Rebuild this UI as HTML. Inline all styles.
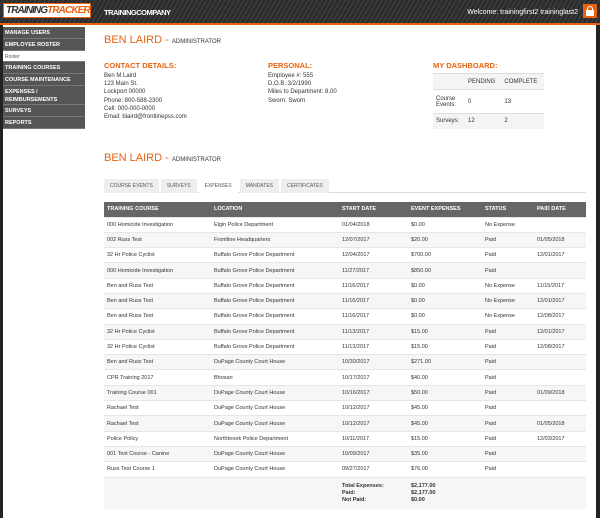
<!DOCTYPE html>
<html><head><style>
*{margin:0;padding:0;box-sizing:border-box}
body{width:600px;height:518px;overflow:hidden;font-family:"Liberation Sans",sans-serif;background:#fff;position:relative;font-size:6px;color:#333}
.hdr{position:absolute;left:0;top:0;width:600px;height:25px;background:repeating-linear-gradient(120deg,#2a2a2a 0 2px,#3a3a3a 2px 4px);border-bottom:2px solid #e8620f}
.logo{position:absolute;left:3px;top:3px;width:88px;height:15px;background:#fff;border:1px solid #e8620f;font:italic bold 10px/13px "Liberation Sans",sans-serif;letter-spacing:-0.9px;padding-left:2px;overflow:hidden;white-space:nowrap}
.logo b{color:#e8620f}
.co{position:absolute;left:104px;top:8px;color:#fff;font-weight:bold;font-size:7.5px;letter-spacing:-0.5px}
.wel{position:absolute;right:22px;top:9px;color:#fff;font-size:7px}
.lock{position:absolute;right:3px;top:4px;width:14px;height:14px;background:#e8620f}
.lock:before{content:"";position:absolute;left:4px;top:2px;width:4px;height:4px;border:1px solid #fff;border-bottom:none;border-radius:3px 3px 0 0}
.lock:after{content:"";position:absolute;left:3px;top:6px;width:8px;height:6px;background:#fff}
.lb{position:absolute;left:0;top:25px;width:3px;height:493px;background:#222}
.rb{position:absolute;right:0;top:25px;width:4px;height:493px;background:#222}
.sb{position:absolute;left:3px;top:27px;width:82px}
.sb div{background:#555;color:#fff;font-weight:bold;font-size:5.5px;padding:0 2px;border-bottom:1px solid #777;height:12px;line-height:12px}
.sb div.w{background:#fff;color:#555;font-weight:normal;font-size:5px;height:11px}
.sb div.t{height:19px;line-height:8px;padding-top:2px}
h1{position:absolute;font-weight:normal;font-size:11px;color:#e8620f}
h1 span{font-size:6px;color:#333}
h2{position:absolute;font-size:7.5px;color:#e8620f;top:61px}
.tx{position:absolute;top:72px;line-height:8.2px;font-size:6px}
.dash{position:absolute;left:433px;top:73px;width:111px;border-collapse:collapse;font-size:6px}
.dash td{padding:2px 3px;border-top:1px solid #ddd}
.tabs{position:absolute;left:104px;top:179px;height:14px;width:482px;border-bottom:1px solid #ddd}
.tabs span{float:left;height:14px;line-height:14px;background:#eee;margin-right:2px;padding:0 6px;font-size:5px;color:#555}
.tabs span.a{background:#fff}
table.m{position:absolute;left:104px;top:202px;width:482px;border-collapse:collapse;font-size:5.5px}
table.m th{background:#666;color:#fff;text-align:left;height:15px;padding-left:3px;font-size:5.5px}
table.m td{height:15.3px;padding-left:3px;border-top:1px solid #e6e6e6}
table.m tr:nth-child(odd) td{background:#f6f6f6}
</style></head><body>
<div class="hdr"><div class="logo">TRAINING<b>TRACKER</b></div><div class="co">TRAININGCOMPANY</div><div class="wel">Welcome: trainingfirst2 traininglast2</div><div class="lock"></div></div>
<div class="lb"></div><div class="rb"></div>
<div class="sb"><div>MANAGE USERS</div><div>EMPLOYEE ROSTER</div><div class="w">Roster</div><div>TRAINING COURSES</div><div>COURSE MAINTENANCE</div><div class="t">EXPENSES /<br>REIMBURSEMENTS</div><div>SURVEYS</div><div>REPORTS</div></div>
<h1 style="left:104px;top:34px">BEN LAIRD - <span>ADMINISTRATOR</span></h1>
<h2 style="left:104px">CONTACT DETAILS:</h2>
<h2 style="left:268px">PERSONAL:</h2>
<h2 style="left:433px">MY DASHBOARD:</h2>
<div class="tx" style="left:104px">Ben M Laird<br>123 Main St.<br>Lockport 00000<br>Phone: 800-588-2300<br>Cell: 000-000-0000<br>Email: blaird@frontlinepss.com</div>
<div class="tx" style="left:268px">Employee #: 555<br>D.O.B.:3/2/1990<br>Miles to Department: 8.00<br>Sworn: Sworn</div>
<table class="dash"><tr style="background:#f4f4f4"><td style="height:16px"></td><td>PENDING</td><td>COMPLETE</td></tr><tr><td style="height:24px">Course<br>Events:</td><td>0</td><td>13</td></tr><tr style="background:#f4f4f4"><td style="height:15px">Surveys:</td><td>12</td><td>2</td></tr></table>
<h1 style="left:104px;top:152px">BEN LAIRD - <span>ADMINISTRATOR</span></h1>
<div class="tabs"><span>COURSE EVENTS</span><span>SURVEYS</span><span class="a">EXPENSES</span><span>MANDATES</span><span>CERTIFICATES</span></div>
<table class="m">
<tr><th style="width:107px">TRAINING COURSE</th><th style="width:128px">LOCATION</th><th style="width:69px">START DATE</th><th style="width:74px">EVENT EXPENSES</th><th style="width:52px">STATUS</th><th>PAID DATE</th></tr>
<tr><td>000 Homicide Investigation</td><td>Elgin Police Department</td><td>01/04/2018</td><td>$0.00</td><td>No Expense</td><td></td></tr>
<tr><td>002 Russ Test</td><td>Frontline Headquarters</td><td>12/07/2017</td><td>$20.00</td><td>Paid</td><td>01/05/2018</td></tr>
<tr><td>32 Hr Police Cyclist</td><td>Buffalo Grove Police Department</td><td>12/04/2017</td><td>$700.00</td><td>Paid</td><td>12/01/2017</td></tr>
<tr><td>000 Homicide Investigation</td><td>Buffalo Grove Police Department</td><td>11/27/2017</td><td>$850.00</td><td>Paid</td><td></td></tr>
<tr><td>Ben and Russ Test</td><td>Buffalo Grove Police Department</td><td>11/16/2017</td><td>$0.00</td><td>No Expense</td><td>11/15/2017</td></tr>
<tr><td>Ben and Russ Test</td><td>Buffalo Grove Police Department</td><td>11/16/2017</td><td>$0.00</td><td>No Expense</td><td>12/01/2017</td></tr>
<tr><td>Ben and Russ Test</td><td>Buffalo Grove Police Department</td><td>11/16/2017</td><td>$0.00</td><td>No Expense</td><td>12/08/2017</td></tr>
<tr><td>32 Hr Police Cyclist</td><td>Buffalo Grove Police Department</td><td>11/13/2017</td><td>$15.00</td><td>Paid</td><td>12/01/2017</td></tr>
<tr><td>32 Hr Police Cyclist</td><td>Buffalo Grove Police Department</td><td>11/13/2017</td><td>$15.00</td><td>Paid</td><td>12/08/2017</td></tr>
<tr><td>Ben and Russ Test</td><td>DuPage County Court House</td><td>10/30/2017</td><td>$271.00</td><td>Paid</td><td></td></tr>
<tr><td>CPR Training 2017</td><td>Bhosari</td><td>10/17/2017</td><td>$40.00</td><td>Paid</td><td></td></tr>
<tr><td>Training Course 001</td><td>DuPage County Court House</td><td>10/16/2017</td><td>$50.00</td><td>Paid</td><td>01/09/2018</td></tr>
<tr><td>Rachael Test</td><td>DuPage County Court House</td><td>10/12/2017</td><td>$45.00</td><td>Paid</td><td></td></tr>
<tr><td>Rachael Test</td><td>DuPage County Court House</td><td>10/12/2017</td><td>$45.00</td><td>Paid</td><td>01/05/2018</td></tr>
<tr><td>Police Policy</td><td>Northbrook Police Department</td><td>10/11/2017</td><td>$15.00</td><td>Paid</td><td>12/03/2017</td></tr>
<tr><td>001 Test Course - Canine</td><td>DuPage County Court House</td><td>10/09/2017</td><td>$35.00</td><td>Paid</td><td></td></tr>
<tr><td>Russ Test Course 1</td><td>DuPage County Court House</td><td>09/27/2017</td><td>$76.00</td><td>Paid</td><td></td></tr>
<tr><td style="height:32px;background:#f6f6f6"></td><td style="background:#f6f6f6"></td><td style="background:#f6f6f6;font-weight:bold;line-height:7px">Total Expenses:<br>Paid:<br>Not Paid:</td><td style="background:#f6f6f6;font-weight:bold;line-height:7px">$2,177.00<br>$2,177.00<br>$0.00</td><td style="background:#f6f6f6"></td><td style="background:#f6f6f6"></td></tr>
</table>
</body></html>
